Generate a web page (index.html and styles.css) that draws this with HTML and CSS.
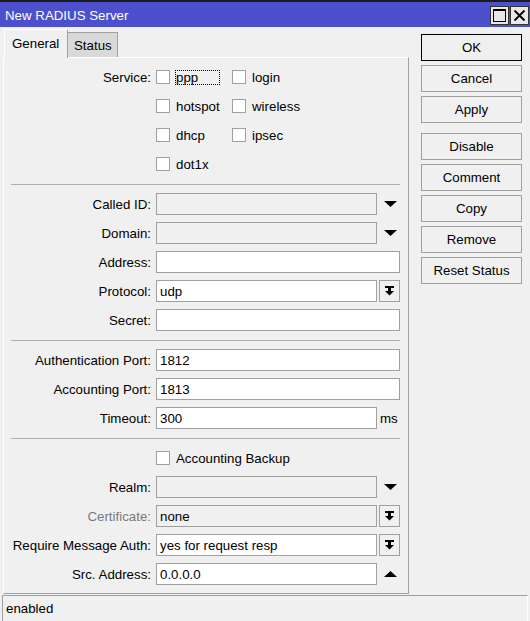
FILE: index.html
```html
<!DOCTYPE html>
<html>
<head>
<meta charset="utf-8">
<title>New RADIUS Server</title>
<link rel="stylesheet" href="styles.css">
</head>
<body>
<div class="window">
  <div class="titlebar">
    <span class="title">New RADIUS Server</span>
    <div class="winbtns">
      <span class="wbtn"><svg width="13" height="13" viewBox="0 0 13 13"><rect x="0.5" y="0.5" width="12" height="12" fill="none" stroke="#000"/><rect x="0" y="0" width="13" height="2" fill="#000"/></svg></span>
      <span class="wbtn"><svg width="13" height="13" viewBox="0 0 13 13"><path d="M1.5 1.5 L11.5 11.5 M11.5 1.5 L1.5 11.5" stroke="#000" stroke-width="1.8" fill="none"/></svg></span>
    </div>
  </div>
  <div class="body">
    <div class="left">
      <div class="tabs">
        <div class="tab tab-active">General</div>
        <div class="tab tab-inactive">Status</div>
      </div>
      <div class="panel">
        <div class="form">
          <div class="label">Service:</div>
          <div class="checks">
            <div class="check"><span class="box"></span><span class="ctext focus">ppp</span></div>
            <div class="check"><span class="box"></span><span class="ctext">login</span></div>
            <div class="check"><span class="box"></span><span class="ctext">hotspot</span></div>
            <div class="check"><span class="box"></span><span class="ctext">wireless</span></div>
            <div class="check"><span class="box"></span><span class="ctext">dhcp</span></div>
            <div class="check"><span class="box"></span><span class="ctext">ipsec</span></div>
            <div class="check"><span class="box"></span><span class="ctext">dot1x</span></div>
          </div>

          <div class="sep"></div>

          <div class="label">Called ID:</div>
          <div class="field"><span class="input short disabled"></span><span class="tri"><svg width="13" height="6" viewBox="0 0 13 6"><polygon points="0,0 13,0 6.5,6" fill="#000"/></svg></span></div>

          <div class="label">Domain:</div>
          <div class="field"><span class="input short disabled"></span><span class="tri"><svg width="13" height="6" viewBox="0 0 13 6"><polygon points="0,0 13,0 6.5,6" fill="#000"/></svg></span></div>

          <div class="label">Address:</div>
          <div class="field"><span class="input"></span></div>

          <div class="label">Protocol:</div>
          <div class="field"><span class="input short">udp</span><span class="dbtn"><svg width="9" height="10" viewBox="0 0 9 10"><rect x="0" y="0" width="9" height="2" fill="#000"/><rect x="3" y="2" width="3" height="3" fill="#000"/><polygon points="0,5 9,5 4.5,9.5" fill="#000"/></svg></span></div>

          <div class="label">Secret:</div>
          <div class="field"><span class="input"></span></div>

          <div class="sep"></div>

          <div class="label">Authentication Port:</div>
          <div class="field"><span class="input">1812</span></div>

          <div class="label">Accounting Port:</div>
          <div class="field"><span class="input">1813</span></div>

          <div class="label">Timeout:</div>
          <div class="field"><span class="input short">300</span><span class="ms">ms</span></div>

          <div class="sep"></div>

          <div class="check single"><span class="box"></span><span class="ctext">Accounting Backup</span></div>

          <div class="label">Realm:</div>
          <div class="field"><span class="input short disabled"></span><span class="tri"><svg width="13" height="6" viewBox="0 0 13 6"><polygon points="0,0 13,0 6.5,6" fill="#000"/></svg></span></div>

          <div class="label label-disabled">Certificate:</div>
          <div class="field"><span class="input short disabled">none</span><span class="dbtn"><svg width="9" height="10" viewBox="0 0 9 10"><rect x="0" y="0" width="9" height="2" fill="#000"/><rect x="3" y="2" width="3" height="3" fill="#000"/><polygon points="0,5 9,5 4.5,9.5" fill="#000"/></svg></span></div>

          <div class="label">Require Message Auth:</div>
          <div class="field"><span class="input short">yes for request resp</span><span class="dbtn"><svg width="9" height="10" viewBox="0 0 9 10"><rect x="0" y="0" width="9" height="2" fill="#000"/><rect x="3" y="2" width="3" height="3" fill="#000"/><polygon points="0,5 9,5 4.5,9.5" fill="#000"/></svg></span></div>

          <div class="label">Src. Address:</div>
          <div class="field"><span class="input short">0.0.0.0</span><span class="tri"><svg width="13" height="6" viewBox="0 0 13 6"><polygon points="0,6 13,6 6.5,0" fill="#000"/></svg></span></div>
        </div>
      </div>
    </div>
    <div class="buttons">
      <div class="btn btn-default">OK</div>
      <div class="btn">Cancel</div>
      <div class="btn">Apply</div>
      <div class="btn group-start">Disable</div>
      <div class="btn">Comment</div>
      <div class="btn">Copy</div>
      <div class="btn">Remove</div>
      <div class="btn">Reset Status</div>
    </div>
  </div>
  <div class="statusbar">enabled</div>
</div>
</body>
</html>
```
FILE: styles.css
```css
* { box-sizing: border-box; }
html, body { margin: 0; padding: 0; }
body {
  width: 530px;
  height: 621px;
  overflow: hidden;
  background: #f0f0f0;
  font-family: "Liberation Sans", Arial, sans-serif;
  font-size: 13.3px;
  color: #000;
}
.window {
  width: 530px;
  height: 621px;
  display: flex;
  flex-direction: column;
  background: #f0f0f0;
}
.titlebar {
  height: 27px;
  border-top: 2px solid #1c1c1c;
  background: #4c50cc;
  display: flex;
  align-items: flex-start;
}
.title {
  color: #fff;
  line-height: 15px;
  margin: 6px 0 0 5px;
}
.winbtns {
  margin-left: auto;
  margin-top: 4px;
  margin-right: 1px;
  display: flex;
  gap: 1px;
}
.wbtn {
  width: 19px;
  height: 19px;
  border: 1px solid #333;
  background: #e8e8e8;
  display: flex;
  align-items: center;
  justify-content: center;
}
.body {
  display: flex;
  height: 567px;
}
.left {
  margin-left: 3px;
  width: 406px;
  padding-top: 2px;
  display: flex;
  flex-direction: column;
}
.tabs {
  height: 28px;
  display: flex;
  align-items: flex-end;
  padding-left: 1px;
}
.tab { line-height: 15px; }
.tab-active {
  width: 64px;
  height: 29px;
  margin-bottom: -1px;
  position: relative;
  z-index: 1;
  background: #f0f0f0;
  border-left: 1px solid #fff;
  border-top: 1px solid #fff;
  border-right: 1px solid #a0a0a0;
  padding: 6px 0 0 7px;
}
.tab-inactive {
  width: 50px;
  height: 25px;
  background: #d9d9d9;
  border-top: 1px solid #a0a0a0;
  border-right: 1px solid #a0a0a0;
  padding: 5px 0 0 6px;
}
.panel {
  height: 537px;
  border-left: 1px solid #fff;
  border-top: 1px solid #fff;
  border-right: 1px solid #a0a0a0;
  border-bottom: 1px solid #a0a0a0;
  padding-top: 8px;
}
.form {
  display: grid;
  grid-template-columns: 147px 244px;
  column-gap: 5px;
  row-gap: 7px;
}
.label {
  height: 22px;
  display: flex;
  align-items: center;
  justify-content: flex-end;
  white-space: nowrap;
}
.label-disabled { color: #7a7a7a; }
.checks {
  display: grid;
  grid-template-columns: 76px auto;
  grid-auto-rows: 22px;
  row-gap: 7px;
}
.check {
  display: flex;
  align-items: center;
  height: 22px;
  white-space: nowrap;
}
.check.single { grid-column: 2; }
.box {
  width: 14px;
  height: 14px;
  border: 1px solid #a0a0a0;
  background: #fff;
  flex: none;
}
.ctext {
  margin-left: 5px;
  border: 1px solid transparent;
  line-height: 13px;
}
.ctext.focus {
  width: 45px;
  border: 1px dotted #000;
}
.sep {
  grid-column: 1 / -1;
  height: 1px;
  background: #b0b0b0;
  margin: 2px 0 1px 7px;
}
.field {
  display: flex;
  align-items: center;
  height: 22px;
}
.input {
  width: 244px;
  height: 22px;
  border: 1px solid #a0a0a0;
  background: #fff;
  padding-left: 3px;
  display: flex;
  align-items: center;
  white-space: nowrap;
  flex: none;
}
.input.short { width: 221px; }
.input.disabled { background: #f0f0f0; }
.tri {
  margin-left: 7px;
  display: flex;
  align-items: center;
}
.dbtn {
  margin-left: 2px;
  width: 21px;
  height: 22px;
  border: 1px solid #a0a0a0;
  background: #f0f0f0;
  display: flex;
  align-items: center;
  justify-content: center;
}
.ms { margin-left: 3px; }
.buttons {
  margin-left: 12px;
  padding-top: 7px;
  width: 101px;
  display: flex;
  flex-direction: column;
  gap: 4px;
}
.btn {
  height: 27px;
  border: 1px solid #a0a0a0;
  background: #f0f0f0;
  display: flex;
  align-items: center;
  justify-content: center;
  white-space: nowrap;
}
.btn-default { border-color: #000; }
.group-start { margin-top: 6px; }
.statusbar {
  margin-top: 1px;
  margin-left: 2px;
  width: 526px;
  height: 26px;
  border-top: 1px solid #a0a0a0;
  border-left: 1px solid #a0a0a0;
  border-right: 1px solid #fff;
  padding: 5px 0 0 3px;
  line-height: 15px;
}
```
